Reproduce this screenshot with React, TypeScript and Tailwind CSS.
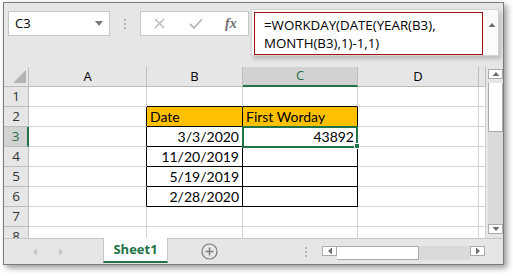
import React from "react";

const cols = ["A", "B", "C", "D", ""];
const rows = [1, 2, 3, 4, 5, 6, 7, 8];

type CellData = { text: string; align: "left" | "right"; fill?: boolean };

const data: Record<string, CellData> = {
  "1-2": { text: "Date", align: "left", fill: true },
  "2-2": { text: "First Worday", align: "left", fill: true },
  "1-3": { text: "3/3/2020", align: "right" },
  "2-3": { text: "43892", align: "right" },
  "1-4": { text: "11/20/2019", align: "right" },
  "1-5": { text: "5/19/2019", align: "right" },
  "1-6": { text: "2/28/2020", align: "right" },
};

function Cell({ c, r }: { c: number; r: number }) {
  const d = data[`${c}-${r}`];
  const blackRight = r >= 2 && r <= 6 && c <= 2;
  const blackBottom = c >= 1 && c <= 2 && r >= 1 && r <= 6;
  return (
    <div
      className={`flex items-end overflow-hidden border-r border-b px-[3px] pb-[1px] text-[14px] leading-[17px] text-black ${
        blackRight ? "border-r-black" : "border-r-[#d4d4d4]"
      } ${blackBottom ? "border-b-black" : "border-b-[#d4d4d4]"} ${
        d?.fill ? "bg-[#ffc000]" : "bg-white"
      } ${d?.align === "right" ? "justify-end" : "justify-start"}`}
    >
      {d?.text}
    </div>
  );
}

function ScrollBtn({ dir }: { dir: "up" | "down" | "left" | "right" }) {
  return (
    <div className="flex items-center justify-center border border-[#ababab] bg-white">
      <svg width="8" height="8" viewBox="0 0 8 8">
        {dir === "up" && <path d="M0.5 6 L4 2 L7.5 6 Z" fill="#6d6d6d" />}
        {dir === "down" && <path d="M0.5 2 L4 6 L7.5 2 Z" fill="#6d6d6d" />}
        {dir === "left" && <path d="M6 0.5 L2 4 L6 7.5 Z" fill="#6d6d6d" />}
        {dir === "right" && <path d="M2 0.5 L6 4 L2 7.5 Z" fill="#6d6d6d" />}
      </svg>
    </div>
  );
}

export default function App() {
  return (
    <div className="w-[513px] h-[276px] bg-white pt-[2px] pl-[3px]">
      {/* window */}
      <div className="flex h-[263px] w-[501px] flex-col border border-[#7c7c7c] bg-[#e6e6e6] shadow-[3px_3px_6px_rgba(0,0,0,0.4)]">
        {/* formula bar */}
        <div className="flex h-[64px] items-start pl-[4px]">
          <div className="mt-[8px] flex h-[25px] w-[102px] items-center justify-between border border-[#c6c6c6] bg-white pl-[6px] pr-[6px] font-['Open_Sans'] text-[13px] text-black">
            <span>C3</span>
            <svg width="8" height="5" viewBox="0 0 8 5">
              <path d="M0 0 L8 0 L4 5 Z" fill="#7a7a7a" />
            </svg>
          </div>
          <div className="mt-[16px] ml-[14px] flex w-[2px] flex-col gap-[2px]">
            <div className="h-[2px] w-[2px] bg-[#b4b4b4]" />
            <div className="h-[2px] w-[2px] bg-[#b4b4b4]" />
            <div className="h-[2px] w-[2px] bg-[#b4b4b4]" />
          </div>
          <div className="mt-[8px] ml-[14px] flex h-[25px] w-[109px] items-center border border-[#c6c6c6] bg-white">
            <svg className="ml-[13px]" width="11" height="11" viewBox="0 0 11 11">
              <path d="M1 1 L10 10 M10 1 L1 10" stroke="#b7b7b7" strokeWidth="1.4" />
            </svg>
            <svg className="ml-[24px]" width="14" height="11" viewBox="0 0 14 11">
              <path d="M1 6 L5 10 L13 1" stroke="#b7b7b7" strokeWidth="1.8" fill="none" />
            </svg>
            <span className="ml-[22px] font-['Liberation_Serif'] text-[14px] font-bold italic text-[#6d6d6d]">
              fx
            </span>
          </div>
          <div className="mt-[6px] ml-[2px] flex h-[47px] w-[248px] items-start border border-[#d4d4d4] bg-[#fbfbfb] pl-[2px] pt-[2px] shadow-[2px_3px_4px_rgba(0,0,0,0.18)]">
            <div className="h-[43px] w-[229px] border border-[#a31515] bg-white pl-[9px] pt-[3px] font-['Open_Sans'] text-[13.3px] leading-[18px] text-black">
              <div>=WORKDAY(DATE(YEAR(B3),</div>
              <div>MONTH(B3),1)-1,1)</div>
            </div>
            <svg className="ml-[5px] mt-[10px]" width="8" height="6" viewBox="0 0 8 6">
              <path d="M0.5 5 L4 1 L7.5 5 Z" fill="#6d6d6d" />
            </svg>
          </div>
        </div>

        {/* grid + vertical scrollbar */}
        <div className="flex h-[171px]">
          <div className="relative h-[171px] w-[482px] overflow-hidden">
            <div className="grid grid-cols-[25px_118px_96px_115px_121px_7px] grid-rows-[20px_20px_20px_20px_20px_20px_20px_20px_20px] font-['Lato']">
              {/* header row */}
              <div className="relative border-r border-b border-[#bdbdbd] bg-[#e6e6e6]">
                <svg className="absolute left-[9px] top-[3px]" width="13" height="13" viewBox="0 0 13 13">
                  <path d="M13 0 L13 13 L0 13 Z" fill="#b4b4b4" />
                </svg>
              </div>
              {cols.map((c, i) => (
                <div
                  key={c + i}
                  className={`flex items-center justify-center border-r text-[13px] font-['Open_Sans'] ${
                    i === 2
                      ? "border-b-2 border-b-[#217346] border-r-[#bdbdbd] bg-[#d2d2d2] text-[#217346]"
                      : "border-b border-[#bdbdbd] bg-[#e6e6e6] text-black"
                  }`}
                >
                  {c}
                </div>
              ))}
              {rows.map((r) => (
                <React.Fragment key={r}>
                  <div
                    className={`flex items-center justify-center border-b border-b-[#bdbdbd] font-['Open_Sans'] text-[13.5px] ${
                      r === 3
                        ? "border-r-2 border-r-[#217346] bg-[#d2d2d2] text-[#217346]"
                        : "border-r border-r-[#bdbdbd] bg-[#e6e6e6] text-[#333]"
                    }`}
                  >
                    {r}
                  </div>
                  {cols.map((_, c) => (
                    <Cell key={c} c={c} r={r} />
                  ))}
                </React.Fragment>
              ))}
            </div>
            {/* selection C3 */}
            <div className="absolute left-[238px] top-[59px] h-[22px] w-[116px] border-2 border-[#217346]" />
            <div className="absolute left-[350px] top-[76px] h-[6px] w-[6px] border border-white bg-[#217346]" />
          </div>
          <div className="ml-[2px] flex w-[15px] flex-col pt-[2px]">
            <div className="h-[14px]">
              <ScrollBtn dir="up" />
            </div>
            <div className="h-[49px] border-x border-b border-[#ababab] bg-white" />
            <div className="flex-1 bg-[#dadada]" />
            <div className="h-[14px]">
              <ScrollBtn dir="down" />
            </div>
          </div>
        </div>

        {/* sheet tabs */}
        <div className="flex h-[26px] items-start border-t border-[#c6c6c6] bg-[#e6e6e6]">
          <div className="flex h-[25px] w-[99px] items-center gap-[20px] pl-[28px]">
            <svg width="6" height="8" viewBox="0 0 6 8">
              <path d="M5 0.5 L1 4 L5 7.5 Z" fill="#c4c4c4" />
            </svg>
            <svg width="6" height="8" viewBox="0 0 6 8">
              <path d="M1 0.5 L5 4 L1 7.5 Z" fill="#c4c4c4" />
            </svg>
          </div>
          <div className="-mt-[1px] flex h-[25px] w-[65px] items-center justify-center border-x border-[#c6c6c6] border-b-2 border-b-[#217346] bg-white pt-[1px] font-['Open_Sans'] text-[13px] font-bold text-[#217346]">
            Sheet1
          </div>
          <div className="ml-[33px] mt-[4px]">
            <svg width="17" height="17" viewBox="0 0 17 17">
              <circle cx="8.5" cy="8.5" r="7.5" stroke="#7a7a7a" strokeWidth="1.2" fill="none" />
              <path d="M8.5 4.5 V12.5 M4.5 8.5 H12.5" stroke="#7a7a7a" strokeWidth="1.4" />
            </svg>
          </div>
          <div className="ml-[87px] mt-[8px] flex w-[2px] flex-col gap-[2px]">
            <div className="h-[2px] w-[2px] bg-[#b4b4b4]" />
            <div className="h-[2px] w-[2px] bg-[#b4b4b4]" />
            <div className="h-[2px] w-[2px] bg-[#b4b4b4]" />
          </div>
          <div className="ml-[15px] mt-[7px] flex h-[14px] w-[163px]">
            <div className="w-[15px]">
              <ScrollBtn dir="left" />
            </div>
            <div className="w-[82px] border-y border-r border-[#ababab] bg-white" />
            <div className="flex-1 bg-[#dadada]" />
            <div className="w-[15px]">
              <ScrollBtn dir="right" />
            </div>
          </div>
        </div>
      </div>
    </div>
  );
}
